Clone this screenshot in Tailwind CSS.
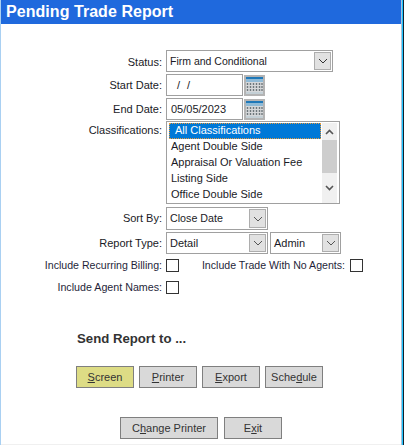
<!DOCTYPE html>
<html>
<head>
<meta charset="utf-8">
<script src="https://cdn.jsdelivr.net/npm/@tailwindcss/browser@4"></script>
</head>
<body class="m-0 bg-white">
<div class="w-[404px] h-[445px] overflow-hidden flex font-['Liberation_Sans',Arial,sans-serif] text-[11px] leading-none text-[#1a1a26]">
  <div class="w-px shrink-0 bg-[#a9d0f2]"></div>
  <div class="w-[400px] shrink-0 flex flex-col bg-white">
    <div class="h-6 shrink-0 bg-[#1f69dd] pl-[5px] flex items-center text-white font-bold text-[16px] tracking-[0.05px]">Pending Trade Report</div>
    <div class="flex items-center h-[22px] mt-[26px] gap-[4px]">
      <label class="w-[161px] text-right pt-[2px]">Status:</label>
      <div class="w-[167px] h-[22px] border border-[#a0a0a0] flex items-center justify-between pl-[3px] pr-px"><span class="text-[10.5px]">Firm and Conditional</span>
        <span class="w-[17px] h-[18px] bg-[#e1e1e1] border border-[#adadad] flex items-center justify-center"><svg width="10" height="6" viewBox="0 0 10 6"><path d="M1 1l4 4 4-4" fill="none" stroke="#333"/></svg></span></div>
    </div>
    <div class="flex items-center h-[22px] mt-[2px] gap-[4px]">
      <label class="w-[161px] text-right">Start Date:</label>
      <div class="w-[77px] h-[22px] border border-[#a0a0a0] pl-[10px] flex items-center gap-[7px]"><span>/</span><span>/</span></div>
      <svg class="-ml-[3px]" width="21" height="21" viewBox="0 0 21 21"><rect x="1" y="1" width="19" height="19" fill="#d6d8da" stroke="#b4b4b4" stroke-width="2"/><rect x="2" y="2" width="17" height="2" fill="#1f78b8"/><rect x="2" y="4" width="17" height="3" fill="#8fbad6"/><path d="M3.500 8v9M6.500 8v9M9.500 8v9M12.500 8v9M15.500 8v9M18 8v9" stroke="#6f787c" stroke-width="1.400" stroke-dasharray="2 1"/><rect x="2" y="17" width="17" height="2" fill="#c4d0d6"/></svg>
    </div>
    <div class="flex items-center h-[22px] mt-[2px] gap-[4px]">
      <label class="w-[161px] text-right">End Date:</label>
      <div class="w-[77px] h-[22px] border border-[#a0a0a0] pl-[4px] flex items-center">05/05/2023</div>
      <svg class="-ml-[3px]" width="21" height="21" viewBox="0 0 21 21"><rect x="1" y="1" width="19" height="19" fill="#d6d8da" stroke="#b4b4b4" stroke-width="2"/><rect x="2" y="2" width="17" height="2" fill="#1f78b8"/><rect x="2" y="4" width="17" height="3" fill="#8fbad6"/><path d="M3.500 8v9M6.500 8v9M9.500 8v9M12.500 8v9M15.500 8v9M18 8v9" stroke="#6f787c" stroke-width="1.400" stroke-dasharray="2 1"/><rect x="2" y="17" width="17" height="2" fill="#c4d0d6"/></svg>
    </div>
    <div class="flex h-[83px] mt-[1px] gap-[4px]">
      <label class="w-[161px] text-right pt-[4px]">Classifications:</label>
      <div class="w-[174px] h-[83px] border border-[#a0a0a0] flex pt-px pl-px pr-[2px]">
        <div class="flex-1 flex flex-col">
          <div class="h-[16px] mx-px bg-[#0078d7] text-white border border-dotted border-[#e89a3c] flex items-center pl-[5px] pb-px">All Classifications</div>
          <div class="h-[16px] flex items-center pl-[3px] pb-[2px]">Agent Double Side</div>
          <div class="h-[16px] flex items-center pl-[3px] pb-[2px]">Appraisal Or Valuation Fee</div>
          <div class="h-[16px] flex items-center pl-[3px] pb-[2px]">Listing Side</div>
          <div class="h-[16px] flex items-center pl-[3px] pb-[2px]">Office Double Side</div>
        </div>
        <div class="w-[15px] bg-[#f0f0f0] flex flex-col">
          <div class="h-[17px] flex items-center justify-center"><svg width="9" height="6" viewBox="0 0 9 6"><path d="M1 5l3.500-3.500L8 5" fill="none" stroke="#555" stroke-width="1.600"/></svg></div>
          <div class="h-[33px] bg-[#cdcdcd]"></div>
          <div class="flex-1 flex items-center justify-center"><svg width="9" height="6" viewBox="0 0 9 6"><path d="M1 1l3.500 3.500L8 1" fill="none" stroke="#555" stroke-width="1.600"/></svg></div>
        </div>
      </div>
    </div>
    <div class="flex items-center h-[23px] mt-[3px] gap-[4px]">
      <label class="w-[161px] text-right">Sort By:</label>
      <div class="w-[102px] h-[23px] border border-[#a0a0a0] flex items-center justify-between pl-[3px] pr-px"><span class="text-[10.7px]">Close Date</span>
        <span class="w-[17px] h-[19px] bg-[#e1e1e1] border border-[#adadad] flex items-center justify-center"><svg width="10" height="6" viewBox="0 0 10 6"><path d="M1 1l4 4 4-4" fill="none" stroke="#555"/></svg></span></div>
    </div>
    <div class="flex items-center h-[22px] mt-[2px]">
      <label class="w-[161px] text-right mr-[4px]">Report Type:</label>
      <div class="w-[102px] h-[22px] border border-[#a0a0a0] flex items-center justify-between pl-[3px] pr-px mr-[2px]"><span>Detail</span>
        <span class="w-[17px] h-[18px] bg-[#e1e1e1] border border-[#adadad] flex items-center justify-center"><svg width="10" height="6" viewBox="0 0 10 6"><path d="M1 1l4 4 4-4" fill="none" stroke="#555"/></svg></span></div>
      <div class="w-[71px] h-[22px] border border-[#a0a0a0] flex items-center justify-between pl-[3px] pr-px"><span>Admin</span>
        <span class="w-[17px] h-[18px] bg-[#e1e1e1] border border-[#adadad] flex items-center justify-center"><svg width="10" height="6" viewBox="0 0 10 6"><path d="M1 1l4 4 4-4" fill="none" stroke="#555"/></svg></span></div>
    </div>
    <div class="flex items-center h-[13px] mt-[5px] gap-[4px] text-[#1f1f3a] text-[10.6px]">
      <label class="w-[161px] text-right">Include Recurring Billing:</label>
      <span class="w-[13px] h-[13px] border border-[#333] shrink-0"></span>
      <label class="w-[162px] text-right">Include Trade With No Agents:</label>
      <span class="w-[13px] h-[13px] border border-[#333] shrink-0 ml-px"></span>
    </div>
    <div class="flex items-center h-[13px] mt-[9px] gap-[4px] text-[#1f1f3a] text-[10.7px]">
      <label class="w-[161px] text-right">Include Agent Names:</label>
      <span class="w-[13px] h-[13px] border border-[#333] shrink-0"></span>
    </div>
    <div class="ml-[76px] mt-[38px] h-[13px] flex items-center font-bold text-[13.2px] text-[#333]">Send Report to ...</div>
    <div class="flex ml-[75px] mt-[21px] gap-[5px] text-[11px] text-[#333]">
      <button class="w-[58px] h-[22px] bg-[#dddc85] border border-[#7f7f7f]"><u>S</u>creen</button>
      <button class="w-[58px] h-[22px] bg-[#d9d9d9] border border-[#7f7f7f]"><u>P</u>rinter</button>
      <button class="w-[58px] h-[22px] bg-[#d9d9d9] border border-[#7f7f7f]"><u>E</u>xport</button>
      <button class="w-[58px] h-[22px] bg-[#d9d9d9] border border-[#7f7f7f]">Sche<u>d</u>ule</button>
    </div>
    <div class="flex ml-[119px] mt-[29px] gap-[6px] text-[11px] text-[#333]">
      <button class="w-[98px] h-[22px] bg-[#d9d9d9] border border-[#7f7f7f]">C<u>h</u>ange Printer</button>
      <button class="w-[58px] h-[22px] bg-[#d9d9d9] border border-[#7f7f7f]">E<u>x</u>it</button>
    </div>
    <div class="mt-[5px] h-px bg-[#f0f0f0]"></div>
  </div>
  <div class="w-px shrink-0 bg-[#a9c4dc]"></div>
  <div class="w-px shrink-0 bg-[#1fc4ff]"></div>
  <div class="w-px shrink-0 bg-[#10202c]"></div>
</div>
</body>
</html>
